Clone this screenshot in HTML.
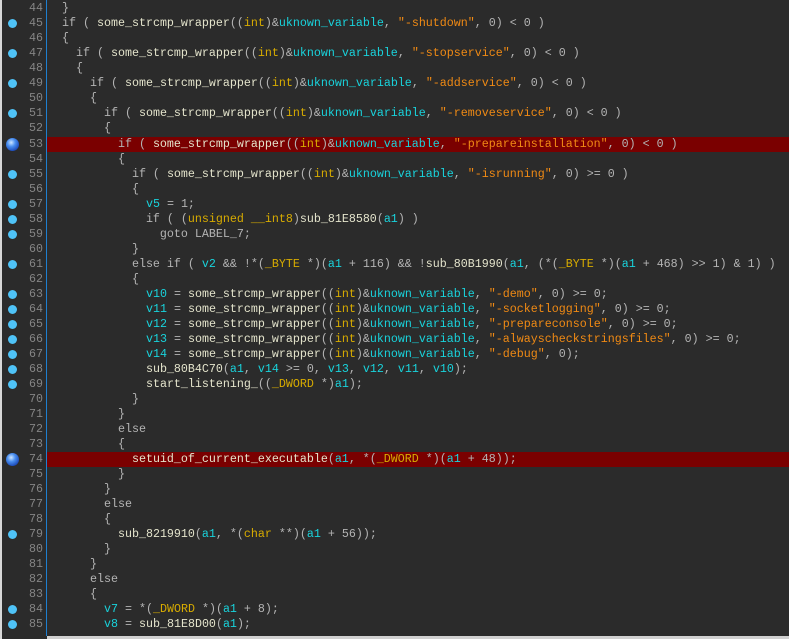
<!DOCTYPE html><html><head><style>
body{margin:0;width:789px;height:639px;background:#2b2b2b;overflow:hidden;position:relative;font-family:"Liberation Mono",monospace;font-size:11.67px}
#lstrip{position:absolute;left:0;top:0;width:2px;height:639px;background:#d8d8d8}
#gut{position:absolute;left:2px;top:0;width:44px;height:639px;background:#2b2b2b}
#bline{position:absolute;left:46px;top:0;width:1px;height:636px;background:#1e7fd0}
#bot{position:absolute;left:47px;top:636px;width:742px;height:3px;background:#d0d0d0}
.ln{position:absolute;left:0;width:789px;height:15px;line-height:15px;white-space:pre}
.hl{position:absolute;left:47px;width:742px;height:15px;background:#7a0000}
.n{position:absolute;left:0;width:43px;text-align:right;color:#858585}
.c{position:absolute;left:62px;color:#b4b4b4}
.f{color:#e4e4cc}.v{color:#19d3dc}.s{color:#f08a14}.t{color:#d8ac00}
.dot{position:absolute;left:8px;width:9px;height:9px;border-radius:50%;background:#4fc3f7}
.bd{position:absolute;left:6px;width:13px;height:13px;border-radius:50%;background:radial-gradient(circle at 40% 35%,#cfe6ff 0,#4a8ff0 35%,#1540b0 80%,#0a2070 100%)}
</style></head><body>
<div id="lstrip"></div><div id="gut"></div><div id="bline"></div><div id="bot"></div>
<div id="code"></div>
<div class="hl" style="top:137px"></div>
<div class="hl" style="top:452px"></div>
<div class="ln" style="top:1px"><span class="n">44</span><span class="c">}</span></div>
<div class="ln" style="top:16px"><span class="dot" style="top:3px"></span><span class="n">45</span><span class="c">if ( <span class="f">some_strcmp_wrapper</span>((<span class="t">int</span>)&amp;<span class="v">uknown_variable</span>, <span class="s">"-shutdown"</span>, 0) &lt; 0 )</span></div>
<div class="ln" style="top:31px"><span class="n">46</span><span class="c">{</span></div>
<div class="ln" style="top:46px"><span class="dot" style="top:3px"></span><span class="n">47</span><span class="c">  if ( <span class="f">some_strcmp_wrapper</span>((<span class="t">int</span>)&amp;<span class="v">uknown_variable</span>, <span class="s">"-stopservice"</span>, 0) &lt; 0 )</span></div>
<div class="ln" style="top:61px"><span class="n">48</span><span class="c">  {</span></div>
<div class="ln" style="top:76px"><span class="dot" style="top:3px"></span><span class="n">49</span><span class="c">    if ( <span class="f">some_strcmp_wrapper</span>((<span class="t">int</span>)&amp;<span class="v">uknown_variable</span>, <span class="s">"-addservice"</span>, 0) &lt; 0 )</span></div>
<div class="ln" style="top:91px"><span class="n">50</span><span class="c">    {</span></div>
<div class="ln" style="top:106px"><span class="dot" style="top:3px"></span><span class="n">51</span><span class="c">      if ( <span class="f">some_strcmp_wrapper</span>((<span class="t">int</span>)&amp;<span class="v">uknown_variable</span>, <span class="s">"-removeservice"</span>, 0) &lt; 0 )</span></div>
<div class="ln" style="top:121px"><span class="n">52</span><span class="c">      {</span></div>
<div class="ln" style="top:137px"><span class="bd" style="top:1px"></span><span class="n">53</span><span class="c">        if ( <span class="f">some_strcmp_wrapper</span>((<span class="t">int</span>)&amp;<span class="v">uknown_variable</span>, <span class="s">"-prepareinstallation"</span>, 0) &lt; 0 )</span></div>
<div class="ln" style="top:152px"><span class="n">54</span><span class="c">        {</span></div>
<div class="ln" style="top:167px"><span class="dot" style="top:3px"></span><span class="n">55</span><span class="c">          if ( <span class="f">some_strcmp_wrapper</span>((<span class="t">int</span>)&amp;<span class="v">uknown_variable</span>, <span class="s">"-isrunning"</span>, 0) &gt;= 0 )</span></div>
<div class="ln" style="top:182px"><span class="n">56</span><span class="c">          {</span></div>
<div class="ln" style="top:197px"><span class="dot" style="top:3px"></span><span class="n">57</span><span class="c">            <span class="v">v5</span> = 1;</span></div>
<div class="ln" style="top:212px"><span class="dot" style="top:3px"></span><span class="n">58</span><span class="c">            if ( (<span class="t">unsigned __int8</span>)<span class="f">sub_81E8580</span>(<span class="v">a1</span>) )</span></div>
<div class="ln" style="top:227px"><span class="dot" style="top:3px"></span><span class="n">59</span><span class="c">              goto LABEL_7;</span></div>
<div class="ln" style="top:242px"><span class="n">60</span><span class="c">          }</span></div>
<div class="ln" style="top:257px"><span class="dot" style="top:3px"></span><span class="n">61</span><span class="c">          else if ( <span class="v">v2</span> &amp;&amp; !*(<span class="t">_BYTE</span> *)(<span class="v">a1</span> + 116) &amp;&amp; !<span class="f">sub_80B1990</span>(<span class="v">a1</span>, (*(<span class="t">_BYTE</span> *)(<span class="v">a1</span> + 468) &gt;&gt; 1) &amp; 1) )</span></div>
<div class="ln" style="top:272px"><span class="n">62</span><span class="c">          {</span></div>
<div class="ln" style="top:287px"><span class="dot" style="top:3px"></span><span class="n">63</span><span class="c">            <span class="v">v10</span> = <span class="f">some_strcmp_wrapper</span>((<span class="t">int</span>)&amp;<span class="v">uknown_variable</span>, <span class="s">"-demo"</span>, 0) &gt;= 0;</span></div>
<div class="ln" style="top:302px"><span class="dot" style="top:3px"></span><span class="n">64</span><span class="c">            <span class="v">v11</span> = <span class="f">some_strcmp_wrapper</span>((<span class="t">int</span>)&amp;<span class="v">uknown_variable</span>, <span class="s">"-socketlogging"</span>, 0) &gt;= 0;</span></div>
<div class="ln" style="top:317px"><span class="dot" style="top:3px"></span><span class="n">65</span><span class="c">            <span class="v">v12</span> = <span class="f">some_strcmp_wrapper</span>((<span class="t">int</span>)&amp;<span class="v">uknown_variable</span>, <span class="s">"-prepareconsole"</span>, 0) &gt;= 0;</span></div>
<div class="ln" style="top:332px"><span class="dot" style="top:3px"></span><span class="n">66</span><span class="c">            <span class="v">v13</span> = <span class="f">some_strcmp_wrapper</span>((<span class="t">int</span>)&amp;<span class="v">uknown_variable</span>, <span class="s">"-alwayscheckstringsfiles"</span>, 0) &gt;= 0;</span></div>
<div class="ln" style="top:347px"><span class="dot" style="top:3px"></span><span class="n">67</span><span class="c">            <span class="v">v14</span> = <span class="f">some_strcmp_wrapper</span>((<span class="t">int</span>)&amp;<span class="v">uknown_variable</span>, <span class="s">"-debug"</span>, 0);</span></div>
<div class="ln" style="top:362px"><span class="dot" style="top:3px"></span><span class="n">68</span><span class="c">            <span class="f">sub_80B4C70</span>(<span class="v">a1</span>, <span class="v">v14</span> &gt;= 0, <span class="v">v13</span>, <span class="v">v12</span>, <span class="v">v11</span>, <span class="v">v10</span>);</span></div>
<div class="ln" style="top:377px"><span class="dot" style="top:3px"></span><span class="n">69</span><span class="c">            <span class="f">start_listening_</span>((<span class="t">_DWORD</span> *)<span class="v">a1</span>);</span></div>
<div class="ln" style="top:392px"><span class="n">70</span><span class="c">          }</span></div>
<div class="ln" style="top:407px"><span class="n">71</span><span class="c">        }</span></div>
<div class="ln" style="top:422px"><span class="n">72</span><span class="c">        else</span></div>
<div class="ln" style="top:437px"><span class="n">73</span><span class="c">        {</span></div>
<div class="ln" style="top:452px"><span class="bd" style="top:1px"></span><span class="n">74</span><span class="c">          <span class="f">setuid_of_current_executable</span>(<span class="v">a1</span>, *(<span class="t">_DWORD</span> *)(<span class="v">a1</span> + 48));</span></div>
<div class="ln" style="top:467px"><span class="n">75</span><span class="c">        }</span></div>
<div class="ln" style="top:482px"><span class="n">76</span><span class="c">      }</span></div>
<div class="ln" style="top:497px"><span class="n">77</span><span class="c">      else</span></div>
<div class="ln" style="top:512px"><span class="n">78</span><span class="c">      {</span></div>
<div class="ln" style="top:527px"><span class="dot" style="top:3px"></span><span class="n">79</span><span class="c">        <span class="f">sub_8219910</span>(<span class="v">a1</span>, *(<span class="t">char</span> **)(<span class="v">a1</span> + 56));</span></div>
<div class="ln" style="top:542px"><span class="n">80</span><span class="c">      }</span></div>
<div class="ln" style="top:557px"><span class="n">81</span><span class="c">    }</span></div>
<div class="ln" style="top:572px"><span class="n">82</span><span class="c">    else</span></div>
<div class="ln" style="top:587px"><span class="n">83</span><span class="c">    {</span></div>
<div class="ln" style="top:602px"><span class="dot" style="top:3px"></span><span class="n">84</span><span class="c">      <span class="v">v7</span> = *(<span class="t">_DWORD</span> *)(<span class="v">a1</span> + 8);</span></div>
<div class="ln" style="top:617px"><span class="dot" style="top:3px"></span><span class="n">85</span><span class="c">      <span class="v">v8</span> = <span class="f">sub_81E8D00</span>(<span class="v">a1</span>);</span></div>
</body></html>
